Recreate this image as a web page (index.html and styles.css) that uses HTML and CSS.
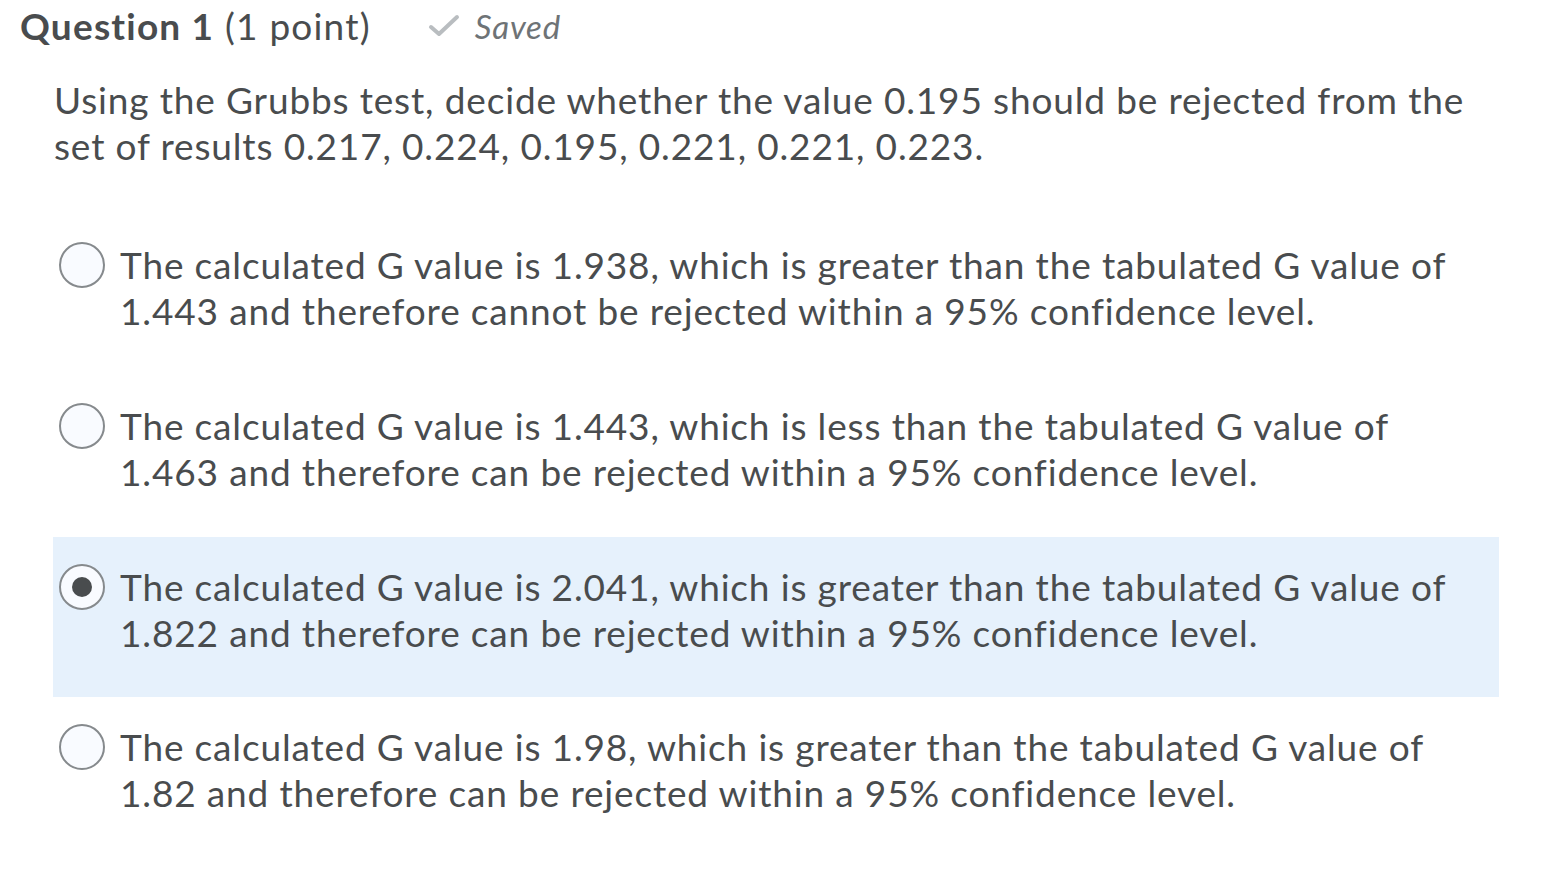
FILE: index.html
```html
<!DOCTYPE html>
<html>
<head>
<meta charset="utf-8">
<link rel="stylesheet" href="styles.css">
</head>
<body>
<div class="page">
  <div class="header">
    <h2 class="title"><span class="qnum">Question 1</span> <span class="pts">(1 point)</span></h2>
    <div class="saved">
      <svg class="check" width="32" height="24" viewBox="0 0 32 24"><path d="M3 13 L11 20 L29 3" fill="none" stroke="#b9bdc0" stroke-width="4" stroke-linecap="round" stroke-linejoin="round"/></svg>
      <span class="saved-text">Saved</span>
    </div>
  </div>
  <p class="question">Using the Grubbs test, decide whether the value 0.195 should be rejected from the set of results 0.217, 0.224, 0.195, 0.221, 0.221, 0.223.</p>
  <div class="options">
    <label class="option">
      <span class="radio"></span>
      <span class="otext">The calculated G value is 1.938, which is greater than the tabulated G value of 1.443 and therefore cannot be rejected within a 95% confidence level.</span>
    </label>
    <label class="option">
      <span class="radio"></span>
      <span class="otext">The calculated G value is 1.443, which is less than the tabulated G value of 1.463 and therefore can be rejected within a 95% confidence level.</span>
    </label>
    <label class="option selected">
      <span class="radio checked"></span>
      <span class="otext">The calculated G value is 2.041, which is greater than the tabulated G value of 1.822 and therefore can be rejected within a 95% confidence level.</span>
    </label>
    <label class="option">
      <span class="radio"></span>
      <span class="otext">The calculated G value is 1.98, which is greater than the tabulated G value of 1.82 and therefore can be rejected within a 95% confidence level.</span>
    </label>
  </div>
</div>
</body>
</html>
```
FILE: styles.css
```css
html, body {
  margin: 0;
  padding: 0;
  background: #ffffff;
}
body {
  font-family: Lato, "Open Sans", sans-serif;
  color: #494c4e;
}
.page {
  width: 1564px;
}
.header {
  display: flex;
  align-items: center;
  padding-left: 20px;
  height: 52px;
}
.title {
  margin: 0;
  font-size: 37px;
  letter-spacing: 1.2px;
  line-height: 52px;
  font-weight: 400;
  color: #494c4e;
}
.qnum {
  font-weight: 700;
}
.saved {
  display: flex;
  align-items: center;
  margin-left: 57px;
  gap: 15px;
}
.check {
  display: block;
}
.saved-text {
  font-style: italic;
  font-size: 33px;
  letter-spacing: 0.8px;
  color: #6e7376;
}
.question {
  margin: 25px 0 0 54px;
  width: 1440px;
  font-size: 37px;
  letter-spacing: 0.85px;
  line-height: 46px;
}
.options {
  margin: 46px 0 0 53px;
  width: 1446px;
}
.option {
  display: flex;
  align-items: flex-start;
  height: 161px;
  box-sizing: border-box;
  padding: 27px 20px 0 6px;
  font-size: 37px;
  letter-spacing: 0.85px;
  line-height: 46px;
}
.option.selected {
  background: #e6f1fc;
  height: 160px;
}
.radio {
  flex: none;
  width: 46px;
  height: 46px;
  box-sizing: border-box;
  border: 2px solid #868a8d;
  border-radius: 50%;
  background: #f9fbff;
  display: flex;
  align-items: center;
  justify-content: center;
  margin-right: 15px;
}
.radio.checked::after {
  content: "";
  width: 20px;
  height: 20px;
  border-radius: 50%;
  background: #494c4e;
}
.otext {
  display: block;
}
```
